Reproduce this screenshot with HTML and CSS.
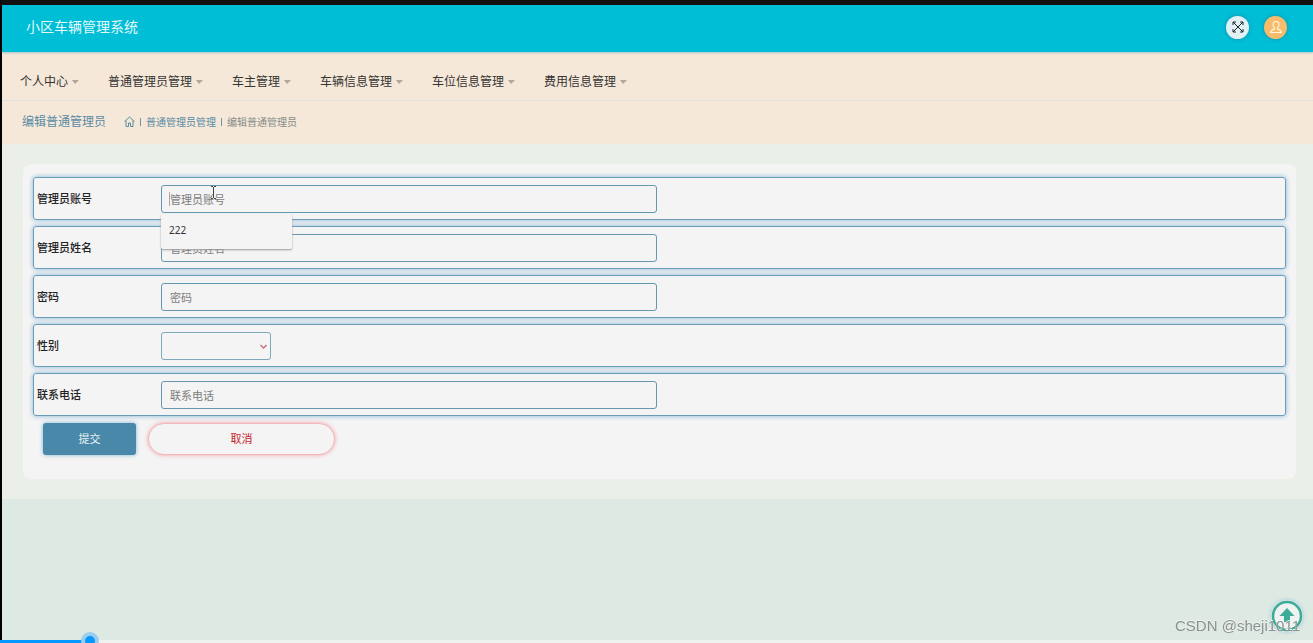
FILE: index.html
```html
<!DOCTYPE html>
<html lang="zh-CN">
<head>
<meta charset="utf-8">
<title>小区车辆管理系统</title>
<link rel="stylesheet" href="styles.css">
</head>
<body>
<header class="topbar">
  <h1 class="brand">小区车辆管理系统</h1>
  <div class="actions">
    <button class="round expand" type="button" aria-label="全屏">
      <svg width="12" height="12" viewBox="0 0 12 12" fill="none" stroke="#222" stroke-width="1"><path d="M1 1l10 10M11 1L1 11M1 4V1h3M8 1h3v3M11 8v3H8M4 11H1V8"/></svg>
    </button>
    <button class="round user" type="button" aria-label="用户">
      <svg width="14" height="14" viewBox="0 0 14 14" fill="none" stroke="#fff3dc" stroke-width="1.100"><path d="M7 1.500c2 0 3 1.400 3 3.200 0 1.500-.6 2.500-1.600 3.200v1c2.200.5 3.600 1.300 4.100 3.600h-11c.5-2.300 1.900-3.100 4.100-3.600v-1C4.600 7.200 4 6.200 4 4.700c0-1.800 1-3.200 3-3.200z"/></svg>
    </button>
  </div>
</header>
<nav class="menu">
  <a class="menu-item" href="#">个人中心</a>
  <a class="menu-item" href="#">普通管理员管理</a>
  <a class="menu-item" href="#">车主管理</a>
  <a class="menu-item" href="#">车辆信息管理</a>
  <a class="menu-item" href="#">车位信息管理</a>
  <a class="menu-item" href="#">费用信息管理</a>
</nav>
<div class="crumbs">
  <h2 class="page-title">编辑普通管理员</h2>
  <div class="trail">
    <a class="home" href="#" aria-label="首页"><svg width="11" height="11" viewBox="0 0 11 11" fill="none" stroke="#5b8ba5"><path d="M.5 5.500l5-4.500 5 4.500M2 4.500v6h2.500V7h2v3.500H9v-6"/></svg></a>
    <span class="bar"></span>
    <a href="#">普通管理员管理</a>
    <span class="bar"></span>
    <span class="current">编辑普通管理员</span>
  </div>
</div>
<main class="content">
  <form class="card">
    <div class="row">
      <label for="account">管理员账号</label>
      <div class="field">
        <input id="account" type="text" placeholder="管理员账号">
        <span class="caret"></span>
        <svg class="pointer" width="7" height="13" viewBox="0 0 7 13" fill="none" stroke="#444"><path d="M1 .5h2M4 .5h2M3.500 1v11M1 12.500h2M4 12.500h2"/></svg>
        <div class="suggest">222</div>
      </div>
    </div>
    <div class="row">
      <label for="name">管理员姓名</label>
      <div class="field"><input id="name" type="text" placeholder="管理员姓名"></div>
    </div>
    <div class="row">
      <label for="password">密码</label>
      <div class="field"><input id="password" type="password" placeholder="密码"></div>
    </div>
    <div class="row">
      <label for="gender">性别</label>
      <div class="select">
        <select id="gender"><option></option></select>
        <svg class="chevron" width="7" height="5" viewBox="0 0 7 5" fill="none" stroke="#c9757f" stroke-width="1.500"><path d="M.5 1l3 3 3-3"/></svg>
      </div>
    </div>
    <div class="row">
      <label for="phone">联系电话</label>
      <div class="field"><input id="phone" type="text" placeholder="联系电话"></div>
    </div>
    <div class="buttons">
      <button class="submit" type="button">提交</button>
      <button class="cancel" type="button">取消</button>
    </div>
  </form>
</main>
<button class="to-top" type="button" aria-label="返回顶部">
  <svg width="32" height="32" viewBox="0 0 32 32"><circle cx="16" cy="16" r="14" fill="#eef3f2" stroke="#3bac98" stroke-width="2.500"/><path d="M16 8l7.500 8H19v6h-6v-6H8.500z" fill="#3bac98"/></svg>
</button>
<div class="watermark">CSDN @sheji1011</div>
<div class="progress"><span class="played"></span><span class="knob"></span></div>
</body>
</html>
```
FILE: styles.css
```css
* {
  box-sizing: border-box;
}

body {
  margin: 0;
  min-height: 100vh;
  border-top: 5px solid #111;
  border-left: 2px solid #000;
  background: #dfe9e3;
  font-family: "Noto Sans", "Noto Sans CJK SC", sans-serif;
  font-size: 11px;
  line-height: 16px;
  color: #333;
}

a {
  color: inherit;
  text-decoration: none;
}

button,
input,
select {
  font: inherit;
}

button {
  padding: 0;
  border: 0;
  cursor: pointer;
}

.topbar {
  position: relative;
  display: flex;
  align-items: center;
  justify-content: space-between;
  height: 47px;
  padding: 0 26px 3px 24px;
  background: #00bed6;
  box-shadow: 0 1px 2px #a9bfd0;
}

.brand {
  margin: 0;
  font-size: 14px;
  font-weight: 400;
  color: #e2f8fa;
}

.actions {
  display: flex;
  gap: 15px;
}

.round {
  display: flex;
  align-items: center;
  justify-content: center;
  width: 23px;
  height: 23px;
  border-radius: 50%;
  box-shadow: 0 0 4px #168fa5;
}

.expand {
  background: #e0f2f5;
}

.user {
  background: #f5bd6b;
}

.menu {
  display: flex;
  align-items: center;
  gap: 29px;
  height: 49px;
  padding: 12px 18px 0;
  border-bottom: 1px solid #e4e0da;
  background: #f5e8d8;
  font-size: 12px;
}

.menu-item {
  display: flex;
  align-items: center;
  gap: 4px;
}

.menu-item::after {
  content: "";
  border: solid transparent;
  border-width: 4px 4px 0 3px;
  border-top-color: #b3a698;
}

.crumbs {
  display: flex;
  align-items: center;
  gap: 18px;
  height: 43px;
  padding: 0 20px 2px;
  background: #f5e8d8;
  color: #5b8ba5;
}

.page-title {
  margin: 0;
  font-size: 12px;
  font-weight: 400;
}

.trail {
  display: flex;
  align-items: center;
  gap: 5px;
  font-size: 10px;
}

.home {
  display: flex;
}

.bar {
  width: 1px;
  height: 8px;
  background: #6b93a8;
}

.current {
  color: #858b88;
}

.content {
  padding: 20px 17px 20px 21px;
  background: #eaefe7;
}

.card {
  display: flex;
  flex-direction: column;
  gap: 6px;
  padding: 13px 10px 24px;
  border-radius: 8px;
  background: #f4f4f4;
}

.row {
  display: flex;
  align-items: center;
  min-height: 43px;
  padding: 0 3px;
  border: 1px solid #6b9db8;
  border-radius: 3px;
  box-shadow: 0 0 5px #82b4d6;
}

.row label {
  width: 124px;
  font-weight: 500;
  color: #222;
}

.field {
  position: relative;
  width: 496px;
}

.field input {
  display: block;
  width: 100%;
  height: 28px;
  padding: 2px 8px 0;
  border: 1px solid #6796ae;
  border-radius: 3px;
  outline: 0;
  background: transparent;
  color: #333;
}

.field input::placeholder {
  color: #7d7d7d;
  opacity: 1;
}

.caret {
  position: absolute;
  top: 7px;
  left: 8px;
  width: 1px;
  height: 14px;
  background: #aaa;
}

.pointer {
  position: absolute;
  top: 1px;
  left: 49px;
}

.suggest {
  position: absolute;
  z-index: 2;
  top: 29px;
  left: 0;
  width: 131px;
  padding: 8px 8px 11px;
  border-radius: 2px;
  background: #f4f4f4;
  box-shadow: 0 1px 2px #999;
  font-size: 10px;
}

.select {
  position: relative;
  width: 110px;
}

.select select {
  display: block;
  width: 100%;
  height: 28px;
  border: 1px solid #7fa9b8;
  border-radius: 3px;
  appearance: none;
  background: transparent;
}

.chevron {
  position: absolute;
  top: 12px;
  right: 4px;
  pointer-events: none;
}

.buttons {
  display: flex;
  gap: 12px;
  padding: 1px 10px 0;
}

.submit {
  width: 93px;
  height: 32px;
  border-radius: 3px;
  background: #4988a8;
  box-shadow: 0 0 4px #82b4d6;
  color: #e8f2f6;
}

.cancel {
  width: 187px;
  height: 32px;
  border: 1px solid #f2b8bd;
  border-radius: 16px;
  background: #f4f4f4;
  box-shadow: 0 0 4px #f2a0a6;
  color: #c4232d;
}

.to-top {
  position: fixed;
  right: 10px;
  bottom: 11px;
  display: flex;
  border-radius: 50%;
  background: transparent;
  box-shadow: 0 0 4px #9fcce0;
}

.watermark {
  position: fixed;
  right: 13px;
  bottom: 9px;
  font-family: "Liberation Sans", sans-serif;
  font-size: 15px;
  color: #8b918e;
  text-shadow: 0 -1px 0 #f3f6f4;
}

.progress {
  position: fixed;
  right: 0;
  bottom: 0;
  left: 0;
  display: flex;
  align-items: flex-start;
  height: 3px;
  background: #edf2ef;
}

.played {
  width: 90px;
  height: 3px;
  background: #0598ff;
}

.knob {
  flex: none;
  width: 18px;
  height: 18px;
  margin: -8px 0 0 -9px;
  border: 4px solid #98cdef;
  border-radius: 50%;
  background: #0598ff;
}
```
